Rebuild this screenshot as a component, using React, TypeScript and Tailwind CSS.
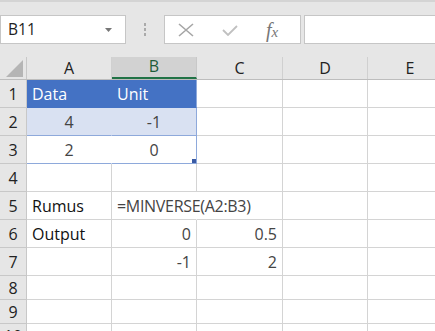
import React from 'react';

const cols = [
  { label: 'A', w: 'w-[85px]' },
  { label: 'B', w: 'w-[85px]' },
  { label: 'C', w: 'w-[86px]' },
  { label: 'D', w: 'w-[85px]' },
  { label: 'E', w: 'w-[85px]' },
];

type Cell = { text?: string; align?: 'left' | 'center' | 'right'; bg?: string; color?: string; bottom?: string; right?: string };

const rows: { n: number; h: string; cells: Cell[] }[] = [
  {
    n: 1,
    h: 'h-[28px]',
    cells: [
      { text: 'Data', bg: 'bg-[#4472c4]', color: 'text-white', bottom: 'border-b-[#4472c4]', right: 'border-r-[#4472c4]' },
      { text: 'Unit', bg: 'bg-[#4472c4]', color: 'text-white', bottom: 'border-b-[#4472c4]', right: 'border-r-[#8ea9db]' },
      {}, {}, {},
    ],
  },
  {
    n: 2,
    h: 'h-[28px]',
    cells: [
      { text: '4', align: 'center', bg: 'bg-[#d9e1f2]', bottom: 'border-b-[#8ea9db]', right: 'border-r-[#d9e1f2]', color: 'text-[#444]' },
      { text: '-1', align: 'center', bg: 'bg-[#d9e1f2]', bottom: 'border-b-[#8ea9db]', right: 'border-r-[#8ea9db]', color: 'text-[#444]' },
      {}, {}, {},
    ],
  },
  {
    n: 3,
    h: 'h-[28px]',
    cells: [
      { text: '2', align: 'center', bottom: 'border-b-[#8ea9db]', right: 'border-r-white', color: 'text-[#444]' },
      { text: '0', align: 'center', bottom: 'border-b-[#8ea9db]', right: 'border-r-[#8ea9db]', color: 'text-[#444]' },
      {}, {}, {},
    ],
  },
  { n: 4, h: 'h-[28px]', cells: [{}, {}, {}, {}, {}] },
  {
    n: 5,
    h: 'h-[28px]',
    cells: [{ text: 'Rumus' }, { text: '=MINVERSE(A2:B3)', color: 'text-[#444]', right: 'border-r-white' }, {}, {}, {}],
  },
  {
    n: 6,
    h: 'h-[28px]',
    cells: [{ text: 'Output' }, { text: '0', align: 'right', color: 'text-[#444]' }, { text: '0.5', align: 'right', color: 'text-[#444]' }, {}, {}],
  },
  {
    n: 7,
    h: 'h-[28px]',
    cells: [{}, { text: '-1', align: 'right', color: 'text-[#444]' }, { text: '2', align: 'right', color: 'text-[#444]' }, {}, {}],
  },
  { n: 8, h: 'h-[24px]', cells: [{}, {}, {}, {}, {}] },
  { n: 9, h: 'h-[24px]', cells: [{}, {}, {}, {}, {}] },
  { n: 10, h: 'h-[24px]', cells: [{}, {}, {}, {}, {}] },
];

export default function App() {
  return (
    <div className="w-[435px] h-[331px] overflow-hidden bg-white font-['Open_Sans','Noto_Sans',sans-serif] select-none">
      {/* toolbar */}
      <div className="h-[57px] bg-[#e6e6e6] border-t-2 border-t-[#d4d4d4] flex items-start pt-[13px] gap-0">
        <div className="relative w-[126px] h-[29px] bg-white border border-[#c6c6c6] flex items-center pl-[7px] text-[15.5px] text-[#222]">
          B11
          <svg className="absolute left-[104px] top-[12px]" width="7" height="4" viewBox="0 0 7 4">
            <path d="M0 0 L7 0 L3.5 4 Z" fill="#777" />
          </svg>
        </div>
        <div className="w-[38px] h-[29px] flex flex-col items-center justify-center gap-[2px]">
          <span className="w-[2px] h-[3px] bg-[#aaa]" />
          <span className="w-[2px] h-[3px] bg-[#aaa]" />
          <span className="w-[2px] h-[3px] bg-[#aaa]" />
        </div>
        <div className="w-[137px] h-[29px] bg-white border border-[#c6c6c6] flex items-center">
          <svg className="ml-[13px]" width="16" height="14" viewBox="0 0 16 14">
            <path d="M1 1 L15 13 M15 1 L1 13" stroke="#a6a6a6" strokeWidth="1.6" />
          </svg>
          <svg className="ml-[28px]" width="16" height="12" viewBox="0 0 16 12">
            <path d="M1 6 L6 11 L15 2" stroke="#c0c0c0" strokeWidth="1.8" fill="none" />
          </svg>
          <span className="ml-[28px] text-[20px] italic text-[#777] font-['Liberation_Serif',serif] leading-none">
            f<span className="text-[15px]">x</span>
          </span>
        </div>
        <div className="ml-[3px] flex-1 h-[29px] bg-white border border-[#c6c6c6] border-r-0" />
      </div>

      {/* column headers */}
      <div className="flex h-[23px] bg-[#e6e6e6] border-b border-[#bdbdbd]">
        <div className="w-[27px] shrink-0 border-r border-[#c8c8c8] relative">
          <svg className="absolute right-[3px] bottom-[2px]" width="17" height="17" viewBox="0 0 17 17">
            <path d="M17 0 L17 17 L0 17 Z" fill="#b5b5b5" />
          </svg>
        </div>
        {cols.map((c) => (
          <div
            key={c.label}
            className={`${c.w} shrink-0 flex items-end justify-center pb-[1px] text-[16px] leading-[20px] border-r ${
              c.label === 'B'
                ? 'bg-[#d2d2d2] text-[#1e5c3a] border-b-2 border-b-[#217346] border-r-[#c8c8c8]'
                : 'text-[#222] border-r-[#d0d0d0]'
            }`}
          >
            {c.label}
          </div>
        ))}
      </div>

      {/* rows */}
      {rows.map((r) => (
        <div key={r.n} className={`flex ${r.h}`}>
          <div className="w-[27px] shrink-0 bg-[#e6e6e6] border-r border-b border-[#c8c8c8] flex items-center justify-center text-[16px] text-[#222]">
            {r.n}
          </div>
          {r.cells.map((c, i) => (
            <div
              key={i}
              className={`${cols[i].w} shrink-0 relative border-r border-b whitespace-nowrap flex items-center text-[16px] px-[5px] ${
                c.bg ?? 'bg-white'
              } ${c.color ?? 'text-[#111]'} ${c.bottom ?? 'border-b-[#d4d4d4]'} ${c.right ?? 'border-r-[#d4d4d4]'} ${
                c.align === 'center' ? 'justify-center' : c.align === 'right' ? 'justify-end' : 'justify-start'
              } ${c.text && c.text.startsWith('=') ? 'overflow-visible z-10 tracking-[-0.3px]' : 'overflow-hidden'}`}
            >
              {c.text}
              {r.n === 3 && i === 1 && (
                <span className="absolute right-0 bottom-0 w-[4px] h-[4px] bg-[#3b5ba5]" />
              )}
            </div>
          ))}
        </div>
      ))}
    </div>
  );
}
